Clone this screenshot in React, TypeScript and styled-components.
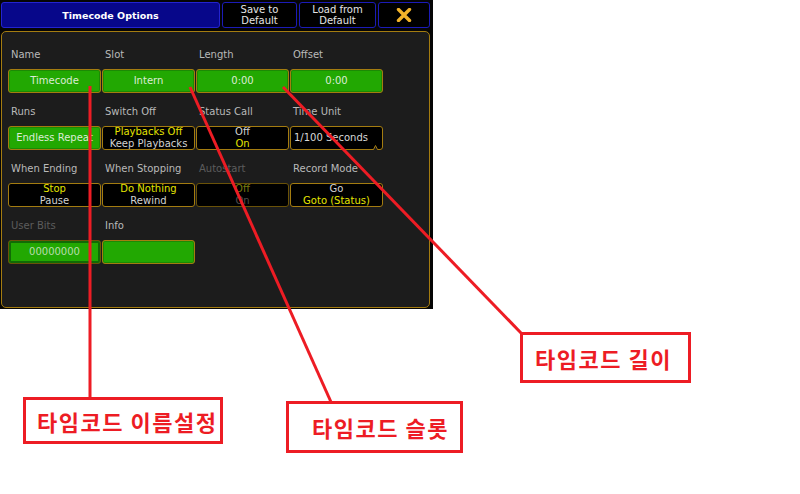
import React from "react";
import styled, { createGlobalStyle, css } from "styled-components";

const Global = createGlobalStyle`
  html, body { margin: 0; padding: 0; background: #fff; }
  * { box-sizing: border-box; }
`;

const Page = styled.div`
  position: relative;
  width: 800px;
  height: 494px;
  background: #ffffff;
  overflow: hidden;
  font-family: "DejaVu Sans", "Liberation Sans", sans-serif;
`;

const Window = styled.div`
  width: 433px;
  height: 309px;
  background: #050505;
  padding: 2px 3px 0 1px;
  display: flex;
  flex-direction: column;
`;

const TitleBar = styled.div`
  display: flex;
  gap: 2px;
  height: 26px;
`;

const TitleBlock = styled.div`
  width: 219px;
  background: #07078a;
  border: 1px solid #2323d0;
  border-radius: 3px;
  color: #ffffff;
  font-weight: bold;
  font-size: 9.5px;
  display: flex;
  align-items: center;
  justify-content: center;
`;

const BarButton = styled.div<{ $w: number }>`
  width: ${(p) => p.$w}px;
  background: #000;
  border: 1px solid #1b1bb8;
  border-radius: 3px;
  color: #e4e4e4;
  font-size: 10px;
  line-height: 11px;
  text-align: center;
  display: flex;
  align-items: center;
  justify-content: center;
`;

const Panel = styled.div`
  margin-top: 3px;
  height: 277px;
  background: #1c1c1c;
  border: 1px solid #a47c10;
  border-radius: 5px;
  padding: 4px 0 0 6px;
  display: grid;
  grid-template-columns: repeat(4, 93px);
  column-gap: 1px;
  align-content: start;
`;

const Field = styled.div`
  display: flex;
  flex-direction: column;
`;

const Label = styled.div<{ $dim?: boolean }>`
  height: 33px;
  padding: 13px 0 0 3px;
  line-height: 12px;
  font-size: 10px;
  color: ${(p) => (p.$dim ? "#5c5c5c" : "#b9b9b9")};
  white-space: nowrap;
`;

const Cell = styled.div<{ $kind: "green" | "black"; $dim?: boolean }>`
  position: relative;
  height: 24px;
  border: 1px solid ${(p) => (p.$dim ? "#6a5208" : "#a47c10")};
  border-radius: 3px;
  font-size: 10px;
  line-height: 12px;
  display: flex;
  flex-direction: column;
  align-items: center;
  justify-content: center;
  white-space: nowrap;
  overflow: hidden;
  ${(p) =>
    p.$kind === "green"
      ? css`
          background: #22a802;
          box-shadow: inset 0 0 0 ${p.$dim ? "2px #116a05" : "1px #1b8a04"};
          color: ${p.$dim ? "#b8dcae" : "#dcecd6"};
        `
      : css`
          background: #000;
          color: #d4d4d4;
        `}
`;

const Line = styled.span<{ $tone?: "yellow" | "white" | "dimYellow" | "dimWhite" }>`
  color: ${(p) =>
    p.$tone === "yellow"
      ? "#e4e400"
      : p.$tone === "dimYellow"
      ? "#7a7a10"
      : p.$tone === "dimWhite"
      ? "#4e4e4e"
      : "#d2d2d2"};
`;

const LeftText = styled.span`
  align-self: flex-start;
  padding-left: 3px;
  color: #d8d8d8;
`;

const Caret = styled.svg`
  position: absolute;
  right: 2px;
  bottom: -1px;
`;

const Overlay = styled.svg`
  position: absolute;
  left: 0;
  top: 0;
  pointer-events: none;
`;

const Callout = styled.div<{ $x: number; $y: number; $w: number; $h: number; $pad: number }>`
  position: absolute;
  left: ${(p) => p.$x}px;
  top: ${(p) => p.$y}px;
  width: ${(p) => p.$w}px;
  height: ${(p) => p.$h}px;
  border: 3px solid #ed1c24;
  background: #fff;
  padding-left: ${(p) => p.$pad}px;
  display: flex;
  align-items: center;
  color: #ed1c24;
  font-family: "Noto Sans CJK KR", "Noto Sans", sans-serif;
  font-weight: bold;
  font-size: 22px;
  letter-spacing: 1.5px;
  white-space: nowrap;
`;

export default function App() {
  return (
    <Page>
      <Global />
      <Window>
        <TitleBar>
          <TitleBlock>Timecode Options</TitleBlock>
          <BarButton $w={75}>
            Save to
            <br />
            Default
          </BarButton>
          <BarButton $w={77}>
            Load from
            <br />
            Default
          </BarButton>
          <BarButton $w={52}>
            <svg width="16" height="14" viewBox="0 0 16 14">
              <path d="M2.5 1.5 L13.5 12.5 M13.5 1.5 L2.5 12.5" stroke="#f2b32a" strokeWidth="3.4" strokeLinecap="round" />
            </svg>
          </BarButton>
        </TitleBar>
        <Panel>
          <Field>
            <Label>Name</Label>
            <Cell $kind="green">Timecode</Cell>
          </Field>
          <Field>
            <Label>Slot</Label>
            <Cell $kind="green">Intern</Cell>
          </Field>
          <Field>
            <Label>Length</Label>
            <Cell $kind="green">0:00</Cell>
          </Field>
          <Field>
            <Label>Offset</Label>
            <Cell $kind="green">0:00</Cell>
          </Field>

          <Field>
            <Label>Runs</Label>
            <Cell $kind="green">Endless Repeat</Cell>
          </Field>
          <Field>
            <Label>Switch Off</Label>
            <Cell $kind="black">
              <Line $tone="yellow">Playbacks Off</Line>
              <Line>Keep Playbacks</Line>
            </Cell>
          </Field>
          <Field>
            <Label>Status Call</Label>
            <Cell $kind="black">
              <Line>Off</Line>
              <Line $tone="yellow">On</Line>
            </Cell>
          </Field>
          <Field>
            <Label>Time Unit</Label>
            <Cell $kind="black" style={{ overflow: "visible" }}>
              <LeftText>1/100 Seconds</LeftText>
              <Caret width="9" height="6" viewBox="0 0 9 6">
                <path d="M0 5.5 L2.5 5.5 L4.5 1.5 L6.5 5.5 L9 5.5 L9 6 L0 6 Z" fill="#1c1c1c" />
                <path d="M0 5.5 L2.5 5.5 L4.5 1.5 L6.5 5.5 L9 5.5" fill="none" stroke="#a47c10" strokeWidth="1" />
              </Caret>
            </Cell>
          </Field>

          <Field>
            <Label>When Ending</Label>
            <Cell $kind="black">
              <Line $tone="yellow">Stop</Line>
              <Line>Pause</Line>
            </Cell>
          </Field>
          <Field>
            <Label>When Stopping</Label>
            <Cell $kind="black">
              <Line $tone="yellow">Do Nothing</Line>
              <Line>Rewind</Line>
            </Cell>
          </Field>
          <Field>
            <Label $dim>Autostart</Label>
            <Cell $kind="black" $dim>
              <Line $tone="dimYellow">Off</Line>
              <Line $tone="dimWhite">On</Line>
            </Cell>
          </Field>
          <Field>
            <Label>Record Mode</Label>
            <Cell $kind="black">
              <Line>Go</Line>
              <Line $tone="yellow">Goto (Status)</Line>
            </Cell>
          </Field>

          <Field>
            <Label $dim>User Bits</Label>
            <Cell $kind="green" $dim>00000000</Cell>
          </Field>
          <Field>
            <Label>Info</Label>
            <Cell $kind="green" />
          </Field>
        </Panel>
      </Window>

      <Overlay width="800" height="494" viewBox="0 0 800 494">
        <g stroke="#ed1c24" strokeWidth="3" fill="none">
          <line x1="90" y1="86" x2="90" y2="398" />
          <line x1="190" y1="87" x2="331" y2="402" />
          <line x1="283" y1="87" x2="522" y2="334" />
        </g>
      </Overlay>

      <Callout $x={23} $y={397} $w={200} $h={47} $pad={11}>
        타임코드 이름설정
      </Callout>
      <Callout $x={286} $y={401} $w={177} $h={52} $pad={23}>
        타임코드 슬롯
      </Callout>
      <Callout $x={520} $y={332} $w={171} $h={51} $pad={12}>
        타임코드 길이
      </Callout>
    </Page>
  );
}
